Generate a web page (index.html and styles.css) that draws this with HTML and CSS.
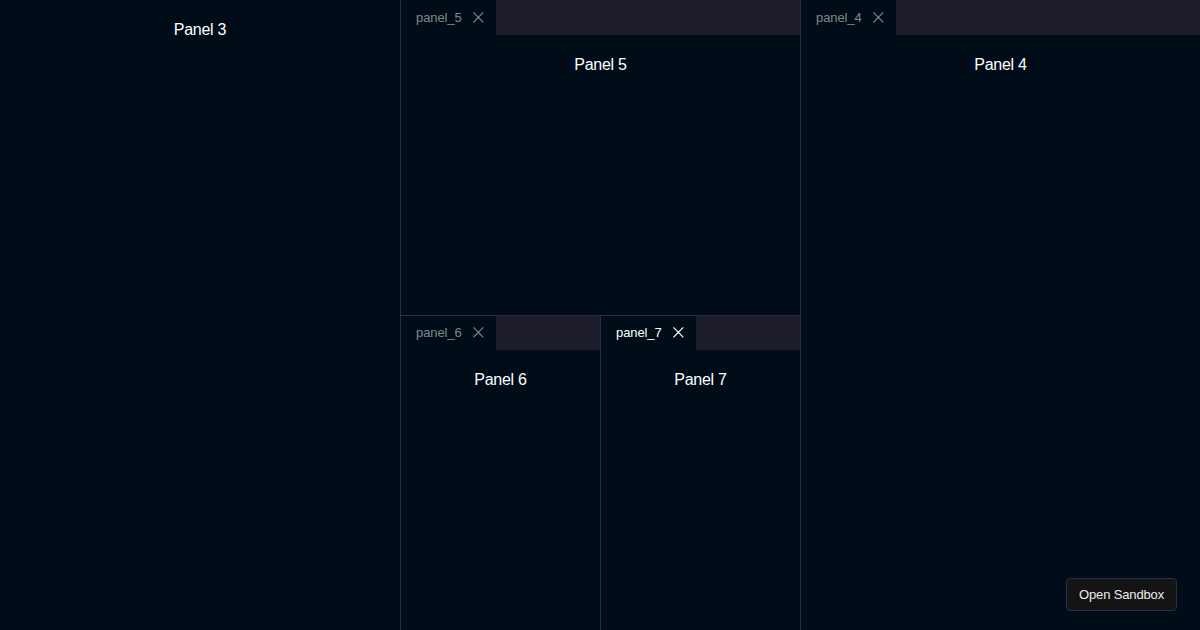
FILE: index.html
```html
<!DOCTYPE html>
<html>
<head>
<meta charset="utf-8">
<link rel="stylesheet" href="styles.css">
</head>
<body>
<div class="dock">
  <div class="col col-first">
    <div class="group">
      <div class="content"><div class="title">Panel 3</div></div>
    </div>
  </div>
  <div class="col col-mid">
    <div class="group group-top">
      <div class="tabbar">
        <div class="tab dim"><span class="label">panel_5</span><span class="close"><svg width="11" height="11" viewBox="0 0 28 28"><path d="M2.1 27.3L0 25.2L11.55 13.65L0 2.1L2.1 0L13.65 11.55L25.2 0L27.3 2.1L15.75 13.65L27.3 25.2L25.2 27.3L13.65 15.75L2.1 27.3Z"/></svg></span></div>
      </div>
      <div class="content"><div class="title">Panel 5</div></div>
    </div>
    <div class="row-bottom">
      <div class="group group-left">
        <div class="tabbar">
          <div class="tab dim"><span class="label">panel_6</span><span class="close"><svg width="11" height="11" viewBox="0 0 28 28"><path d="M2.1 27.3L0 25.2L11.55 13.65L0 2.1L2.1 0L13.65 11.55L25.2 0L27.3 2.1L15.75 13.65L27.3 25.2L25.2 27.3L13.65 15.75L2.1 27.3Z"/></svg></span></div>
        </div>
        <div class="content"><div class="title">Panel 6</div></div>
      </div>
      <div class="group group-right">
        <div class="tabbar">
          <div class="tab active"><span class="label">panel_7</span><span class="close"><svg width="11" height="11" viewBox="0 0 28 28"><path d="M2.1 27.3L0 25.2L11.55 13.65L0 2.1L2.1 0L13.65 11.55L25.2 0L27.3 2.1L15.75 13.65L27.3 25.2L25.2 27.3L13.65 15.75L2.1 27.3Z"/></svg></span></div>
        </div>
        <div class="content"><div class="title">Panel 7</div></div>
      </div>
    </div>
  </div>
  <div class="col col-last">
    <div class="group">
      <div class="tabbar">
        <div class="tab dim"><span class="label">panel_4</span><span class="close"><svg width="11" height="11" viewBox="0 0 28 28"><path d="M2.1 27.3L0 25.2L11.55 13.65L0 2.1L2.1 0L13.65 11.55L25.2 0L27.3 2.1L15.75 13.65L27.3 25.2L25.2 27.3L13.65 15.75L2.1 27.3Z"/></svg></span></div>
      </div>
      <div class="content"><div class="title">Panel 4</div></div>
    </div>
  </div>
</div>
<button class="sandbox">Open Sandbox</button>
</body>
</html>
```
FILE: styles.css
```css
html, body {
  margin: 0;
  padding: 0;
  width: 1200px;
  height: 630px;
  overflow: hidden;
  background: #000c18;
  font-family: "Liberation Sans", Arial, sans-serif;
}

.dock {
  display: flex;
  width: 1200px;
  height: 630px;
}

.col {
  display: flex;
  flex-direction: column;
  height: 630px;
  box-sizing: border-box;
}

.col-first {
  width: 400px;
}

.col-mid {
  width: 400px;
  border-left: 1px solid #2b2b4a;
}

.col-last {
  width: 400px;
  border-left: 1px solid #2b2b4a;
}

.group {
  display: flex;
  flex-direction: column;
  flex: 1;
  min-width: 0;
  background: #000c18;
}

.group-top {
  flex: 0 0 315px;
}

.row-bottom {
  display: flex;
  flex: 1;
}

.group-left {
  flex: 0 0 199px;
}

.group-right {
  flex: 1;
  border-left: 1px solid #2b2b4a;
}

.tabbar {
  display: flex;
  height: 35px;
  flex: 0 0 35px;
  background: #1c1c2a;
}

.row-bottom .tabbar,
.row-bottom .tab {
  box-shadow: inset 0 1px 0 #2b2b4a;
}

.tab {
  display: flex;
  align-items: center;
  width: 95px;
  box-sizing: border-box;
  padding: 0 12px 0 15px;
  background: #000c18;
  font-size: 13px;
  letter-spacing: -0.1px;
  color: rgba(255, 255, 255, 0.5);
}

.tab.active {
  color: #ffffff;
}

.label {
  line-height: 15px;
}

.close {
  display: flex;
  align-items: center;
  justify-content: center;
  margin-left: auto;
  width: 11px;
  height: 11px;
}

.close svg {
  fill: currentColor;
  display: block;
}

.content {
  flex: 1;
  padding-top: 21px;
}

.title {
  text-align: center;
  font-size: 16px;
  line-height: 18px;
  letter-spacing: -0.25px;
  color: #ffffff;
}

.sandbox {
  position: absolute;
  right: 23px;
  bottom: 19px;
  padding: 8px 12px;
  font-family: "Liberation Sans", Arial, sans-serif;
  font-size: 13px;
  line-height: 15px;
  letter-spacing: -0.15px;
  color: #ececec;
  background: #141414;
  border: 1px solid #2b2b4a;
  border-radius: 4px;
}
```
